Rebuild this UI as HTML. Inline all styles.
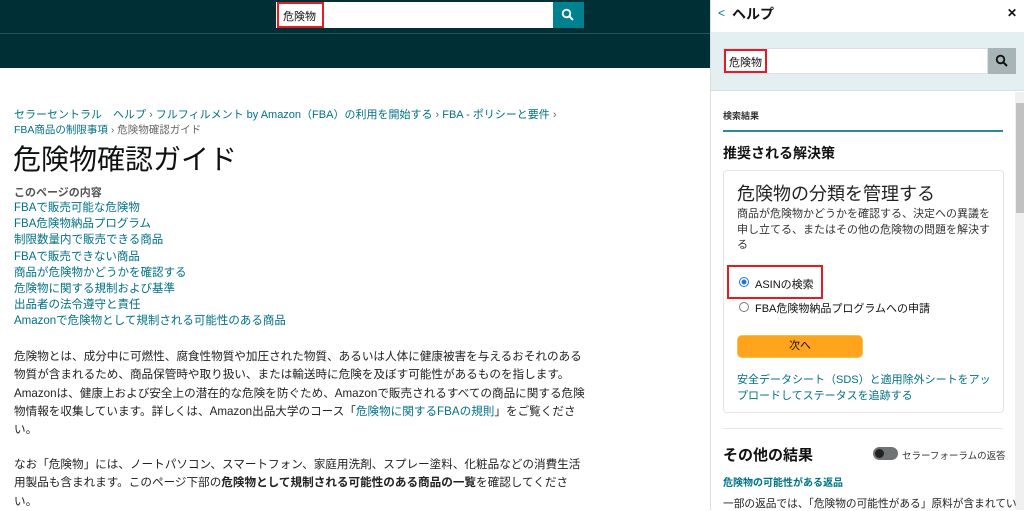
<!DOCTYPE html>
<html><head><meta charset="utf-8"><style>
*{margin:0;padding:0;box-sizing:border-box}
body{width:1024px;height:510px;overflow:hidden;position:relative;background:#fff;font-family:"Liberation Sans","Noto Sans CJK JP",sans-serif;color:#111}
.a{position:absolute;white-space:nowrap}
.l{color:#007185}
</style></head><body>
<div class="a" style="left:0;top:0;width:710px;height:68px;background:#002f36"></div>
<div class="a" style="left:0;top:33px;width:710px;height:1px;background:#2b5158"></div>
<div class="a" style="left:276px;top:2px;width:277px;height:26px;background:#fff"></div>
<div class="a" style="left:277px;top:2px;width:47px;height:26px;border:2px solid #e31b23"></div>
<div class="a" style="left:283px;top:8px;font-size:11px">危険物</div>
<div class="a" style="left:553px;top:2px;width:31px;height:26px;background:#00818f"></div>
<svg class="a" style="left:561px;top:8px" width="14" height="14" viewBox="0 0 14 14"><circle cx="5.5" cy="5.5" r="3.8" stroke="#fff" stroke-width="1.8" fill="none"/><path d="M8.3 8.3L12 12" stroke="#fff" stroke-width="2"/></svg>

<div class="a l" style="left:14px;top:106px;font-size:11px">セラーセントラル　ヘルプ <span style="color:#666">›</span> フルフィルメント by Amazon（FBA）の利用を開始する <span style="color:#666">›</span> FBA - ポリシーと要件 <span style="color:#666">›</span></div>
<div class="a l" style="left:14px;top:122px;font-size:10.5px">FBA商品の制限事項 <span style="color:#666">›</span> <span style="color:#666">危険物確認ガイド</span></div>
<div class="a" style="left:13px;top:138px;font-size:28px;color:#0f1111">危険物確認ガイド</div>
<div class="a" style="left:14px;top:184px;font-size:11px;font-weight:bold;color:#555">このページの内容</div>
<div class="a l" style="left:14px;top:200px;font-size:11.5px;line-height:16.2px">FBAで販売可能な危険物<br>FBA危険物納品プログラム<br>制限数量内で販売できる商品<br>FBAで販売できない商品<br>商品が危険物かどうかを確認する<br>危険物に関する規制および基準<br>出品者の法令遵守と責任<br>Amazonで危険物として規制される可能性のある商品</div>
<div class="a" style="left:14px;top:348px;font-size:11.6px;line-height:18.3px;color:#222">危険物とは、成分中に可燃性、腐食性物質や加圧された物質、あるいは人体に健康被害を与えるおそれのある<br>物質が含まれるため、商品保管時や取り扱い、または輸送時に危険を及ぼす可能性があるものを指します。<br>Amazonは、健康上および安全上の潜在的な危険を防ぐため、Amazonで販売されるすべての商品に関する危険<br>物情報を収集しています。詳しくは、Amazon出品大学のコース「<span class="l">危険物に関するFBAの規則</span>」をご覧くださ<br>い。</div>
<div class="a" style="left:14px;top:456px;font-size:11.6px;line-height:18.3px;color:#222">なお「危険物」には、ノートパソコン、スマートフォン、家庭用洗剤、スプレー塗料、化粧品などの消費生活<br>用製品も含まれます。このページ下部の<b>危険物として規制される可能性のある商品の一覧</b>を確認してくださ<br>い。</div>

<div class="a" style="left:710px;top:0;width:314px;height:510px;background:#fff;border-left:1px solid #ddd"></div>
<div class="a" style="left:718px;top:6px;font-size:12px;color:#007185">&lt;</div>
<div class="a" style="left:732px;top:4px;font-size:14px;font-weight:bold">ヘルプ</div>
<div class="a" style="left:1007px;top:6px;font-size:12px;font-weight:bold">✕</div>
<div class="a" style="left:711px;top:32px;width:313px;height:59px;background:#e3eff1;border-bottom:1px solid #d5e3e6"></div>
<div class="a" style="left:723px;top:48px;width:265px;height:26px;background:#fff;border:1px solid #dde"></div>
<div class="a" style="left:724px;top:49px;width:43px;height:24px;border:2px solid #e31b23"></div>
<div class="a" style="left:729px;top:54px;font-size:11px">危険物</div>
<div class="a" style="left:988px;top:48px;width:28px;height:26px;background:#a7b5b6"></div>
<svg class="a" style="left:995px;top:54px" width="14" height="14" viewBox="0 0 14 14"><circle cx="5.5" cy="5.5" r="3.8" stroke="#111" stroke-width="1.8" fill="none"/><path d="M8.3 8.3L12 12" stroke="#111" stroke-width="2"/></svg>
<div class="a" style="left:1015px;top:92px;width:9px;height:418px;background:#f0f0f0"></div>
<div class="a" style="left:1016px;top:103px;width:8px;height:110px;background:#c1c1c1"></div>
<div class="a" style="left:723px;top:109px;font-size:9px;font-weight:bold;color:#333">検索結果</div>
<div class="a" style="left:723px;top:130px;width:280px;height:2px;background:#2b8a9a"></div>
<div class="a" style="left:723px;top:143px;font-size:14px;font-weight:bold">推奨される解決策</div>
<div class="a" style="left:723px;top:170px;width:281px;height:243px;border:1px solid #e3e6e6;border-radius:4px"></div>
<div class="a" style="left:737px;top:180px;font-size:18px;color:#222">危険物の分類を管理する</div>
<div class="a" style="left:737px;top:207px;width:258px;white-space:normal;font-size:11px;line-height:15.5px;color:#333">商品が危険物かどうかを確認する、決定への異議を申し立てる、またはその他の危険物の問題を解決する</div>
<div class="a" style="left:727px;top:265px;width:96px;height:34px;border:2px solid #e31b23"></div>
<div class="a" style="left:739px;top:277px;width:10px;height:10px;border-radius:50%;border:1px solid #1a73e8;background:radial-gradient(#1a73e8 40%,#fff 45%)"></div>
<div class="a" style="left:755px;top:276px;font-size:11px">ASINの検索</div>
<div class="a" style="left:739px;top:302px;width:10px;height:10px;border-radius:50%;border:1px solid #777"></div>
<div class="a" style="left:755px;top:300px;font-size:11px">FBA危険物納品プログラムへの申請</div>
<div class="a" style="left:737px;top:335px;width:126px;height:23px;background:#ffa41c;border:1px solid #f2c24a;border-radius:5px;font-size:11px;text-align:center;line-height:21px">次へ</div>
<div class="a l" style="left:737px;top:372px;width:260px;white-space:normal;font-size:11px;line-height:16px">安全データシート（SDS）と適用除外シートをアップロードしてステータスを追跡する</div>
<div class="a" style="left:723px;top:428px;width:280px;height:1px;background:#e3e6e6"></div>
<div class="a" style="left:723px;top:444px;font-size:15px;font-weight:bold">その他の結果</div>
<div class="a" style="left:873px;top:447px;width:25px;height:13px;border-radius:7px;background:#6f7373"></div>
<div class="a" style="left:875px;top:449px;width:9px;height:9px;border-radius:50%;background:#222"></div>
<div class="a" style="left:902px;top:448px;font-size:9.5px;color:#333">セラーフォーラムの返答</div>
<div class="a l" style="left:723px;top:474px;font-size:10px;font-weight:bold">危険物の可能性がある返品</div>
<div class="a" style="left:723px;top:496px;font-size:10.7px;color:#222">一部の返品では、「危険物の可能性がある」原料が含まれてい</div>
</body></html>
